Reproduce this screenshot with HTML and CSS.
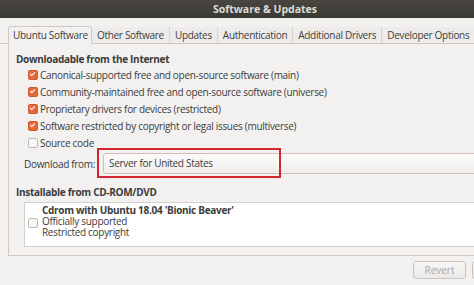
FILE: index.html
```html
<!DOCTYPE html>
<html lang="en">
<head>
    <meta charset="UTF-8">
    <title>Software &amp; Updates</title>
    <link rel="stylesheet" href="styles.css">
</head>
<body>
    <div class="window">
        <div class="titlebar">Software &amp; Updates</div>

        <div class="tabs">
            <div class="tab active">Ubuntu Software</div>
            <div class="tab">Other Software</div>
            <div class="tab">Updates</div>
            <div class="tab">Authentication</div>
            <div class="tab">Additional Drivers</div>
            <div class="tab">Developer Options</div>
            <div class="tab tab-rest"></div>
        </div>

        <div class="panel">
            <h2 class="section">Downloadable from the Internet</h2>
            <div class="check-row"><span class="box checked"></span>Canonical-supported free and open-source software (main)</div>
            <div class="check-row"><span class="box checked"></span>Community-maintained free and open-source software (universe)</div>
            <div class="check-row"><span class="box checked"></span>Proprietary drivers for devices (restricted)</div>
            <div class="check-row"><span class="box checked"></span>Software restricted by copyright or legal issues (multiverse)</div>
            <div class="check-row"><span class="box"></span>Source code</div>

            <div class="download-row">
                <span class="label">Download from:</span>
                <div class="combo">
                    Server for United States
                    <div class="highlight"></div>
                </div>
            </div>

            <h2 class="section cd">Installable from CD-ROM/DVD</h2>
            <div class="cd-list">
                <span class="box"></span>
                <div class="cd-text">
                    <div class="cd-name">Cdrom with Ubuntu 18.04 'Bionic Beaver'</div>
                    <div>Officially supported</div>
                    <div>Restricted copyright</div>
                </div>
            </div>
        </div>

        <div class="buttons">
            <button class="btn" disabled>Revert</button>
            <button class="btn"></button>
        </div>
    </div>
</body>
</html>
```

FILE: styles.css
```css
body {
    margin: 0;
    padding: 0;
    background-color: #f2f1f0;
    overflow: hidden;
    font-family: 'Open Sans', 'Noto Sans', sans-serif;
    font-size: 10px;
    letter-spacing: -0.3px;
    color: #3c3c3c;
}

.window {
    width: 530px;
}

.titlebar {
    height: 18px;
    line-height: 18px;
    background: linear-gradient(#48463f, #3a3935);
    color: #dfdbd2;
    font-weight: bold;
    font-size: 10.5px;
    letter-spacing: 0;
    text-align: center;
}

.tabs {
    display: flex;
    margin-top: 9px;
    padding-left: 8px;
    height: 16px;
    border-bottom: 1px solid #cdc8c3;
}

.tab {
    padding: 0 5px;
    line-height: 16px;
    border-right: 1px solid #d6d2ce;
    background-color: #eeecea;
    white-space: nowrap;
}

.tab.active {
    background-color: #f2f1f0;
    border: 1px solid #cdc8c3;
    border-bottom: none;
    border-radius: 3px 3px 0 0;
    height: 17px;
    margin-top: -1px;
    padding: 0 3px 0 4px;
}

.tab-rest {
    width: 40px;
    margin-left: 2px;
}

.panel {
    margin-left: 8px;
    border: 1px solid #cdc8c3;
    border-top: none;
    padding: 8px 0 8px 7px;
}

.section {
    margin: 0;
    font-size: 10px;
    font-weight: bold;
    line-height: 14px;
}

.check-row {
    display: flex;
    align-items: center;
    height: 17px;
    padding-left: 12px;
    white-space: nowrap;
}

.box {
    width: 8px;
    height: 8px;
    border: 1px solid #bfbab5;
    border-radius: 2px;
    background-color: #f8f8f7;
    margin-right: 2px;
    flex-shrink: 0;
}

.box.checked {
    background-color: #e4693a;
    border-color: #d05a2e;
    position: relative;
}

.box.checked::after {
    content: '';
    position: absolute;
    left: 2px;
    top: 0px;
    width: 2px;
    height: 4px;
    border: solid #fff;
    border-width: 0 1.5px 1.5px 0;
    transform: rotate(45deg);
}

.download-row {
    display: flex;
    align-items: center;
    margin-top: 2px;
    padding-left: 8px;
}

.label {
    width: 79px;
    flex-shrink: 0;
    white-space: nowrap;
}

.combo {
    position: relative;
    flex: 1;
    height: 19px;
    line-height: 19px;
    padding-left: 5px;
    border: 1px solid #d2beb5;
    border-radius: 3px;
    background: linear-gradient(#fbfbfb, #efeeec);
}

.highlight {
    position: absolute;
    left: -7px;
    top: -6px;
    width: 180px;
    height: 26px;
    border: 2px solid #d1262f;
}

.section.cd {
    margin-top: 11px;
}

.cd-list {
    display: flex;
    align-items: flex-start;
    margin: 3px 0 0 8px;
    height: 45px;
    padding: 2px 0 0 3px;
    box-sizing: border-box;
    background-color: #fff;
    border: 1px solid #d4d0cc;
}

.cd-list .box {
    margin: 13px 4px 0 0;
}

.cd-text {
    line-height: 11px;
}

.cd-name {
    font-weight: bold;
}

.buttons {
    display: flex;
    gap: 6px;
    padding: 5px 0 0 413px;
}

.btn {
    width: 53px;
    height: 18px;
    padding: 0;
    font-family: inherit;
    font-size: 10px;
    color: #3c3c3c;
    border: 1px solid #c9c4bf;
    border-radius: 3px;
    background: linear-gradient(#f7f6f5, #ebe9e7);
}

.btn:disabled {
    color: #a9a6a2;
}
```
